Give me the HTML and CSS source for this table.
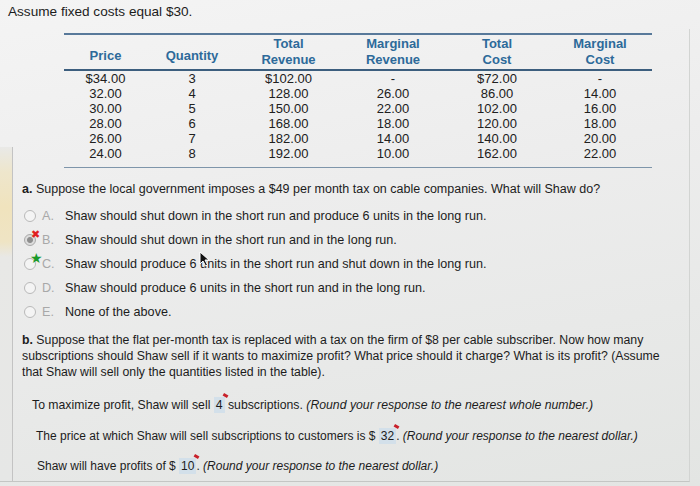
FILE: index.html
```html
<!DOCTYPE html>
<html>
<head>
<meta charset="utf-8">
<link rel="stylesheet" href="styles.css">
</head>
<body>
<div class="page">
  <div class="title">Assume fixed costs equal $30.</div>
  <div class="content">
    <div class="gutter"><div class="gutter-line"></div></div>
    <div class="main">
      <table class="data">
        <colgroup>
          <col class="c1"><col class="c2"><col class="c3"><col class="c4"><col class="c5"><col class="c6">
        </colgroup>
        <thead>
          <tr>
            <th class="single">Price</th>
            <th class="single">Quantity</th>
            <th>Total<br>Revenue</th>
            <th>Marginal<br>Revenue</th>
            <th>Total<br>Cost</th>
            <th>Marginal<br>Cost</th>
          </tr>
        </thead>
        <tbody>
          <tr class="first"><td>$34.00</td><td>3</td><td>$102.00</td><td>-</td><td>$72.00</td><td>-</td></tr>
          <tr><td>32.00</td><td>4</td><td>128.00</td><td>26.00</td><td>86.00</td><td>14.00</td></tr>
          <tr><td>30.00</td><td>5</td><td>150.00</td><td>22.00</td><td>102.00</td><td>16.00</td></tr>
          <tr><td>28.00</td><td>6</td><td>168.00</td><td>18.00</td><td>120.00</td><td>18.00</td></tr>
          <tr><td>26.00</td><td>7</td><td>182.00</td><td>14.00</td><td>140.00</td><td>20.00</td></tr>
          <tr class="last"><td>24.00</td><td>8</td><td>192.00</td><td>10.00</td><td>162.00</td><td>22.00</td></tr>
        </tbody>
      </table>

      <p class="question"><b>a.</b> Suppose the local government imposes a $49 per month tax on cable companies. What will Shaw do?</p>

      <div class="options">
        <div class="option">
          <span class="mark"><span class="radio"></span></span>
          <span class="letter">A.</span>
          <span class="text">Shaw should shut down in the short run and produce 6 units in the long run.</span>
        </div>
        <div class="option">
          <span class="mark"><span class="radio selected"></span><span class="badge wrong">&#x2716;</span></span>
          <span class="letter">B.</span>
          <span class="text">Shaw should shut down in the short run and in the long run.</span>
        </div>
        <div class="option">
          <span class="mark"><span class="radio"></span><span class="badge right">&#x2605;</span></span>
          <span class="letter">C.</span>
          <span class="text cursor-host">Shaw should produce 6 units in the short run and shut down in the long run.<svg class="cursor" width="11" height="16" viewBox="0 0 11 16"><path d="M1 1 L1 13 L4 10 L6.5 15 L8.5 14 L6 9 L10 9 Z" fill="#111" stroke="#fff" stroke-width="1"/></svg></span>
        </div>
        <div class="option">
          <span class="mark"><span class="radio"></span></span>
          <span class="letter">D.</span>
          <span class="text">Shaw should produce 6 units in the short run and in the long run.</span>
        </div>
        <div class="option">
          <span class="mark"><span class="radio"></span></span>
          <span class="letter">E.</span>
          <span class="text">None of the above.</span>
        </div>
      </div>

      <p class="question partb"><b>b.</b> Suppose that the flat per-month tax is replaced with a tax on the firm of $8 per cable subscriber. Now how many subscriptions should Shaw sell if it wants to maximize profit? What price should it charge? What is its profit? (Assume that Shaw will sell only the quantities listed in the table).</p>

      <div class="answers">
        <div class="answer a1">To maximize profit, Shaw will sell <span class="box">4</span> subscriptions. <i>(Round your response to the nearest whole number.)</i></div>
        <div class="answer a2">The price at which Shaw will sell subscriptions to customers is $ <span class="box">32</span>. <i>(Round your response to the nearest dollar.)</i></div>
        <div class="answer a3">Shaw will have profits of $ <span class="box">10</span>. <i>(Round your response to the nearest dollar.)</i></div>
      </div>
    </div>
  </div>
</div>
</body>
</html>
```

FILE: styles.css
```css
html, body {
  margin: 0;
  padding: 0;
}
body {
  width: 700px;
  height: 486px;
  overflow: hidden;
  font-family: "Liberation Sans", Arial, sans-serif;
  color: #1c1c1c;
  background: linear-gradient(170deg, #f4f4f4 0%, #ededed 40%, #e3e5e3 100%);
}
.page {
  height: 486px;
  display: flex;
  flex-direction: column;
}
.title {
  font-size: 13.6px;
  line-height: 16px;
  padding: 4px 0 0 8px;
  height: 29px;
  box-sizing: border-box;
}
.content {
  display: flex;
  width: 690px;
  height: 453px;
  border-bottom: 1px solid #c4c6c4;
  border-right: 1px solid #d2d4d2;
  box-sizing: border-box;
}
.gutter {
  width: 13px;
  flex: none;
  display: flex;
  flex-direction: column;
  padding-top: 118px;
}
.gutter-line {
  flex: 1;
  border-right: 1px solid #c3c3c3;
  background: linear-gradient(180deg, #e9e9e7 0px, #eee6cc 25px, #f0e3bd 60px, #efe4c4 95px, #e8e8e6 110px, #e6e7e6 100%);
}
.main {
  flex: 1;
  padding-top: 4px;
}
table.data {
  border-collapse: collapse;
  margin-left: 51px;
  width: 588px;
  table-layout: fixed;
  border-top: 2px solid #58799a;
  border-bottom: 1.5px solid #7e95aa;
  font-size: 13px;
}
col.c1 { width: 83px; }
col.c2 { width: 90px; }
col.c3 { width: 103px; }
col.c4 { width: 106px; }
col.c5 { width: 102px; }
col.c6 { width: 104px; }
thead th {
  color: #2d6a9a;
  font-weight: bold;
  line-height: 16px;
  padding: 1px 0 1px 0;
  text-align: center;
  vertical-align: bottom;
  border-bottom: 2px solid #3c5e7e;
}
thead th.single {
  padding-bottom: 5px;
}
tbody td {
  text-align: center;
  line-height: 15px;
  padding: 0;
  color: #202020;
}
tbody tr.last td {
  padding-bottom: 6px;
}
.question {
  margin: 13px 0 0 9px;
  font-size: 12.5px;
  line-height: 16px;
  width: 640px;
}
.options {
  margin-top: 7px;
  margin-left: 11px;
}
.option {
  height: 24px;
  display: flex;
  align-items: center;
  font-size: 12.6px;
}
.mark {
  position: relative;
  width: 18px;
  height: 12px;
  flex: none;
}
.radio {
  display: block;
  width: 10px;
  height: 10px;
  border-radius: 50%;
  border: 1px solid #b9b9b9;
  background: #f4f4f4;
}
.radio.selected {
  background: radial-gradient(circle, #8e8e8e 0 2.5px, #dcdcdc 3.5px);
  border-color: #aaa;
}
.badge {
  position: absolute;
  font-size: 11px;
  line-height: 11px;
  left: 7px;
  top: -5px;
}
.badge.wrong { color: #e02020; }
.badge.right { color: #1c9a2a; font-size: 14px; line-height: 14px; top: -7px; left: 6px; }
.letter {
  width: 23px;
  flex: none;
  color: #a8a8a8;
}
.text {
  color: #1c1c1c;
}
.cursor-host {
  position: relative;
}
.cursor {
  position: absolute;
  left: 134px;
  top: -6px;
}
.partb {
  margin-top: 8px;
  width: 650px;
  font-size: 12.3px;
}
.answers {
  margin-top: 14px;
  display: flex;
  flex-direction: column;
  gap: 8.5px;
  font-size: 12px;
}
.answer {
  height: 22px;
  line-height: 22px;
}
.a1 { padding-left: 19px; font-size: 12.25px; }
.a2 { padding-left: 23px; }
.a3 { padding-left: 24px; }
.box {
  position: relative;
  display: inline-block;
  background: #d3e0ea;
  line-height: 16px;
  padding: 0 2px;
}
.box::after {
  content: "";
  position: absolute;
  right: -3px;
  top: -3px;
  width: 5px;
  height: 3px;
  background: #c8202a;
  transform: rotate(30deg);
}
```
